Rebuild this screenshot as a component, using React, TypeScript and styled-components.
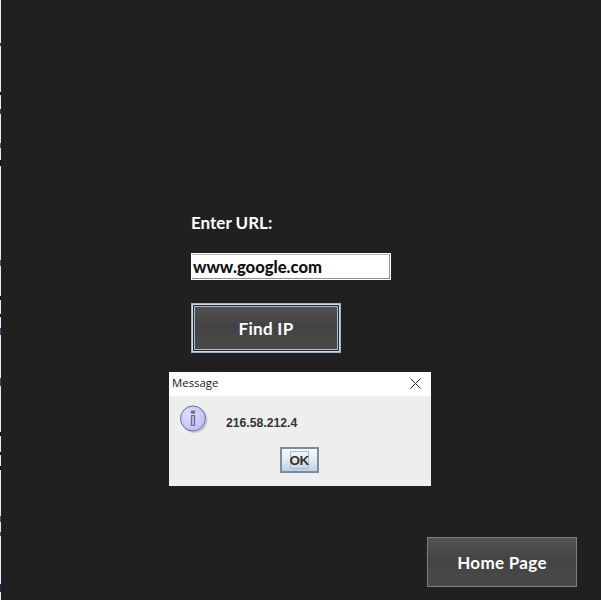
import React from "react";
import styled, { createGlobalStyle } from "styled-components";

const GlobalStyle = createGlobalStyle`
  html, body {
    margin: 0;
    padding: 0;
    background: #202020;
  }
`;

const Page = styled.div`
  position: relative;
  display: flex;
  width: 601px;
  height: 600px;
  overflow: hidden;
  background: #202020;
  font-family: "Lato", "Liberation Sans", sans-serif;
`;

// thin strip of the window behind, left over at the screenshot's edge
const EdgeStrip = styled.div`
  flex: 0 0 1px;
  background: linear-gradient(
    to bottom,
    #e8e8e8 0 43px,
    #24406e 43px 46px,
    #e8e8e8 46px 92px,
    #111 92px 95px,
    #e8e8e8 95px 109px,
    #24406e 109px 114px,
    #e8e8e8 114px 143px,
    #555 143px 148px,
    #e8e8e8 148px 160px,
    #111 160px 166px,
    #e8e8e8 166px 260px,
    #555 260px 266px,
    #e8e8e8 266px 296px,
    #111 296px 300px,
    #e8e8e8 300px 314px,
    #111 314px 317px,
    #e8e8e8 317px 328px,
    #24507e 328px 335px,
    #e8e8e8 335px 378px,
    #24507e 378px 386px,
    #e8e8e8 386px 432px,
    #111 432px 436px,
    #e8e8e8 436px 452px,
    #111 452px 455px,
    #e8e8e8 455px 466px,
    #111 466px 470px,
    #e8e8e8 470px 516px,
    #555 516px 522px,
    #e8e8e8 522px 532px,
    #555 532px 536px,
    #e8e8e8 536px 584px,
    #222a60 584px 592px,
    #e8e8e8 592px 600px
  );
`;

const Main = styled.main`
  flex: 1;
  display: flex;
  flex-direction: column;
`;

const Form = styled.form`
  display: flex;
  flex-direction: column;
  align-items: flex-start;
  margin: 214px 0 0 190px;
`;

const Label = styled.label`
  height: 19px;
  color: #fff;
  font-size: 17px;
  font-weight: 700;
  line-height: 18px;
`;

const UrlInput = styled.input`
  box-sizing: border-box;
  width: 200px;
  height: 27px;
  margin-top: 20px;
  padding: 0 1px;
  border: 1px solid #fff;
  box-shadow: inset -1px -1px 0 #8a9099, inset 0 1px 0 #b4b8bd;
  outline: none;
  background: #fff;
  color: #111;
  font-family: inherit;
  font-size: 16.6px;
  font-weight: 900;
`;

const ActionButton = styled.button<{ $focused?: boolean }>`
  box-sizing: border-box;
  width: 150px;
  height: 50px;
  padding: 0;
  border: 1px solid ${(p) => (p.$focused ? "#9db2c8" : "#7d8084")};
  box-shadow: ${(p) =>
    p.$focused
      ? "inset 0 0 0 1px #cfd9e4, inset 0 0 0 2px #26282b, inset 0 0 0 3px #a9b9ca"
      : "none"};
  background: linear-gradient(to bottom, #555 0%, #434343 45%, #4a4a4a 100%);
  color: #fff;
  font-family: inherit;
  font-size: 17px;
  font-weight: 700;
  letter-spacing: 0.3px;
`;

const FindButton = styled(ActionButton)`
  margin-top: 23px;
`;

const HomeButton = styled(ActionButton)`
  align-self: flex-end;
  margin: auto 24px 13px 0;
`;

const Dialog = styled.div`
  position: absolute;
  left: 169px;
  top: 372px;
  width: 262px;
  height: 114px;
  display: flex;
  flex-direction: column;
  background: #eeeeee;
  font-family: "Liberation Sans", Arial, sans-serif;
`;

const TitleBar = styled.div`
  display: flex;
  align-items: center;
  justify-content: space-between;
  height: 24px;
  padding: 0 10px 4px 3px;
  box-sizing: border-box;
  background: #fff;
  color: #222;
  font-family: "Open Sans", "Liberation Sans", sans-serif;
  font-size: 11.4px;
`;

const CloseIcon = styled.svg`
  display: block;
  width: 11px;
  height: 11px;
  margin-top: 2px;
`;

const MessageRow = styled.div`
  display: flex;
  align-items: flex-start;
  gap: 18px;
  height: 38px;
  padding: 9px 0 0 11px;
  box-sizing: border-box;
`;

const InfoIcon = styled.svg`
  display: block;
  flex: none;
  width: 28px;
  height: 29px;
`;

const MessageText = styled.span`
  margin-top: 11px;
  color: #333;
  font-size: 12.2px;
  font-weight: 700;
`;

const ButtonRow = styled.div`
  display: flex;
  justify-content: center;
  margin: 13px 2px 0 0;
`;

const OkButton = styled.button`
  box-sizing: border-box;
  width: 39px;
  height: 26px;
  padding: 2px 8px;
  border: 2px solid #7d8c9c;
  background: linear-gradient(to bottom, #f6f9fc 0%, #dfe8f1 55%, #bcd0e4 100%);
  color: #333;
  font-family: inherit;
  font-size: 13.5px;
  font-weight: 700;
`;

const OkFocus = styled.span`
  display: flex;
  align-items: center;
  justify-content: center;
  height: 100%;
  border: 1px solid #a9bdd2;
  box-sizing: border-box;
  letter-spacing: -0.5px;
`;

export default function App() {
  return (
    <Page>
      <GlobalStyle />
      <EdgeStrip />
      <Main>
        <Form onSubmit={(e) => e.preventDefault()}>
          <Label>Enter URL:</Label>
          <UrlInput defaultValue="www.google.com" />
          <FindButton $focused>Find IP</FindButton>
        </Form>
        <HomeButton>Home Page</HomeButton>
      </Main>
      <Dialog>
        <TitleBar>
          Message
          <CloseIcon viewBox="0 0 11 11">
            <path d="M.5.5l10 10M10.5.5l-10 10" stroke="#222" strokeWidth="1" fill="none" />
          </CloseIcon>
        </TitleBar>
        <MessageRow>
          <InfoIcon viewBox="0 0 28 29">
            <defs>
              <radialGradient id="infoFill" cx="40%" cy="35%" r="70%">
                <stop offset="0%" stopColor="#e2e2fb" />
                <stop offset="100%" stopColor="#bcbcf0" />
              </radialGradient>
            </defs>
            <circle cx="14.5" cy="15" r="13" fill="#9a9a9a" opacity="0.4" />
            <circle cx="13" cy="13.5" r="12.5" fill="url(#infoFill)" stroke="#6c6ca6" strokeWidth="1" />
            <rect x="10.8" y="5.5" width="4.4" height="3.2" fill="#6f6f9e" />
            <rect x="10.8" y="10" width="4.4" height="11" fill="#6f6f9e" />
            <rect x="12.2" y="11.2" width="1.6" height="8.6" fill="#c9c9ee" />
          </InfoIcon>
          <MessageText>216.58.212.4</MessageText>
        </MessageRow>
        <ButtonRow>
          <OkButton>
            <OkFocus>OK</OkFocus>
          </OkButton>
        </ButtonRow>
      </Dialog>
    </Page>
  );
}
